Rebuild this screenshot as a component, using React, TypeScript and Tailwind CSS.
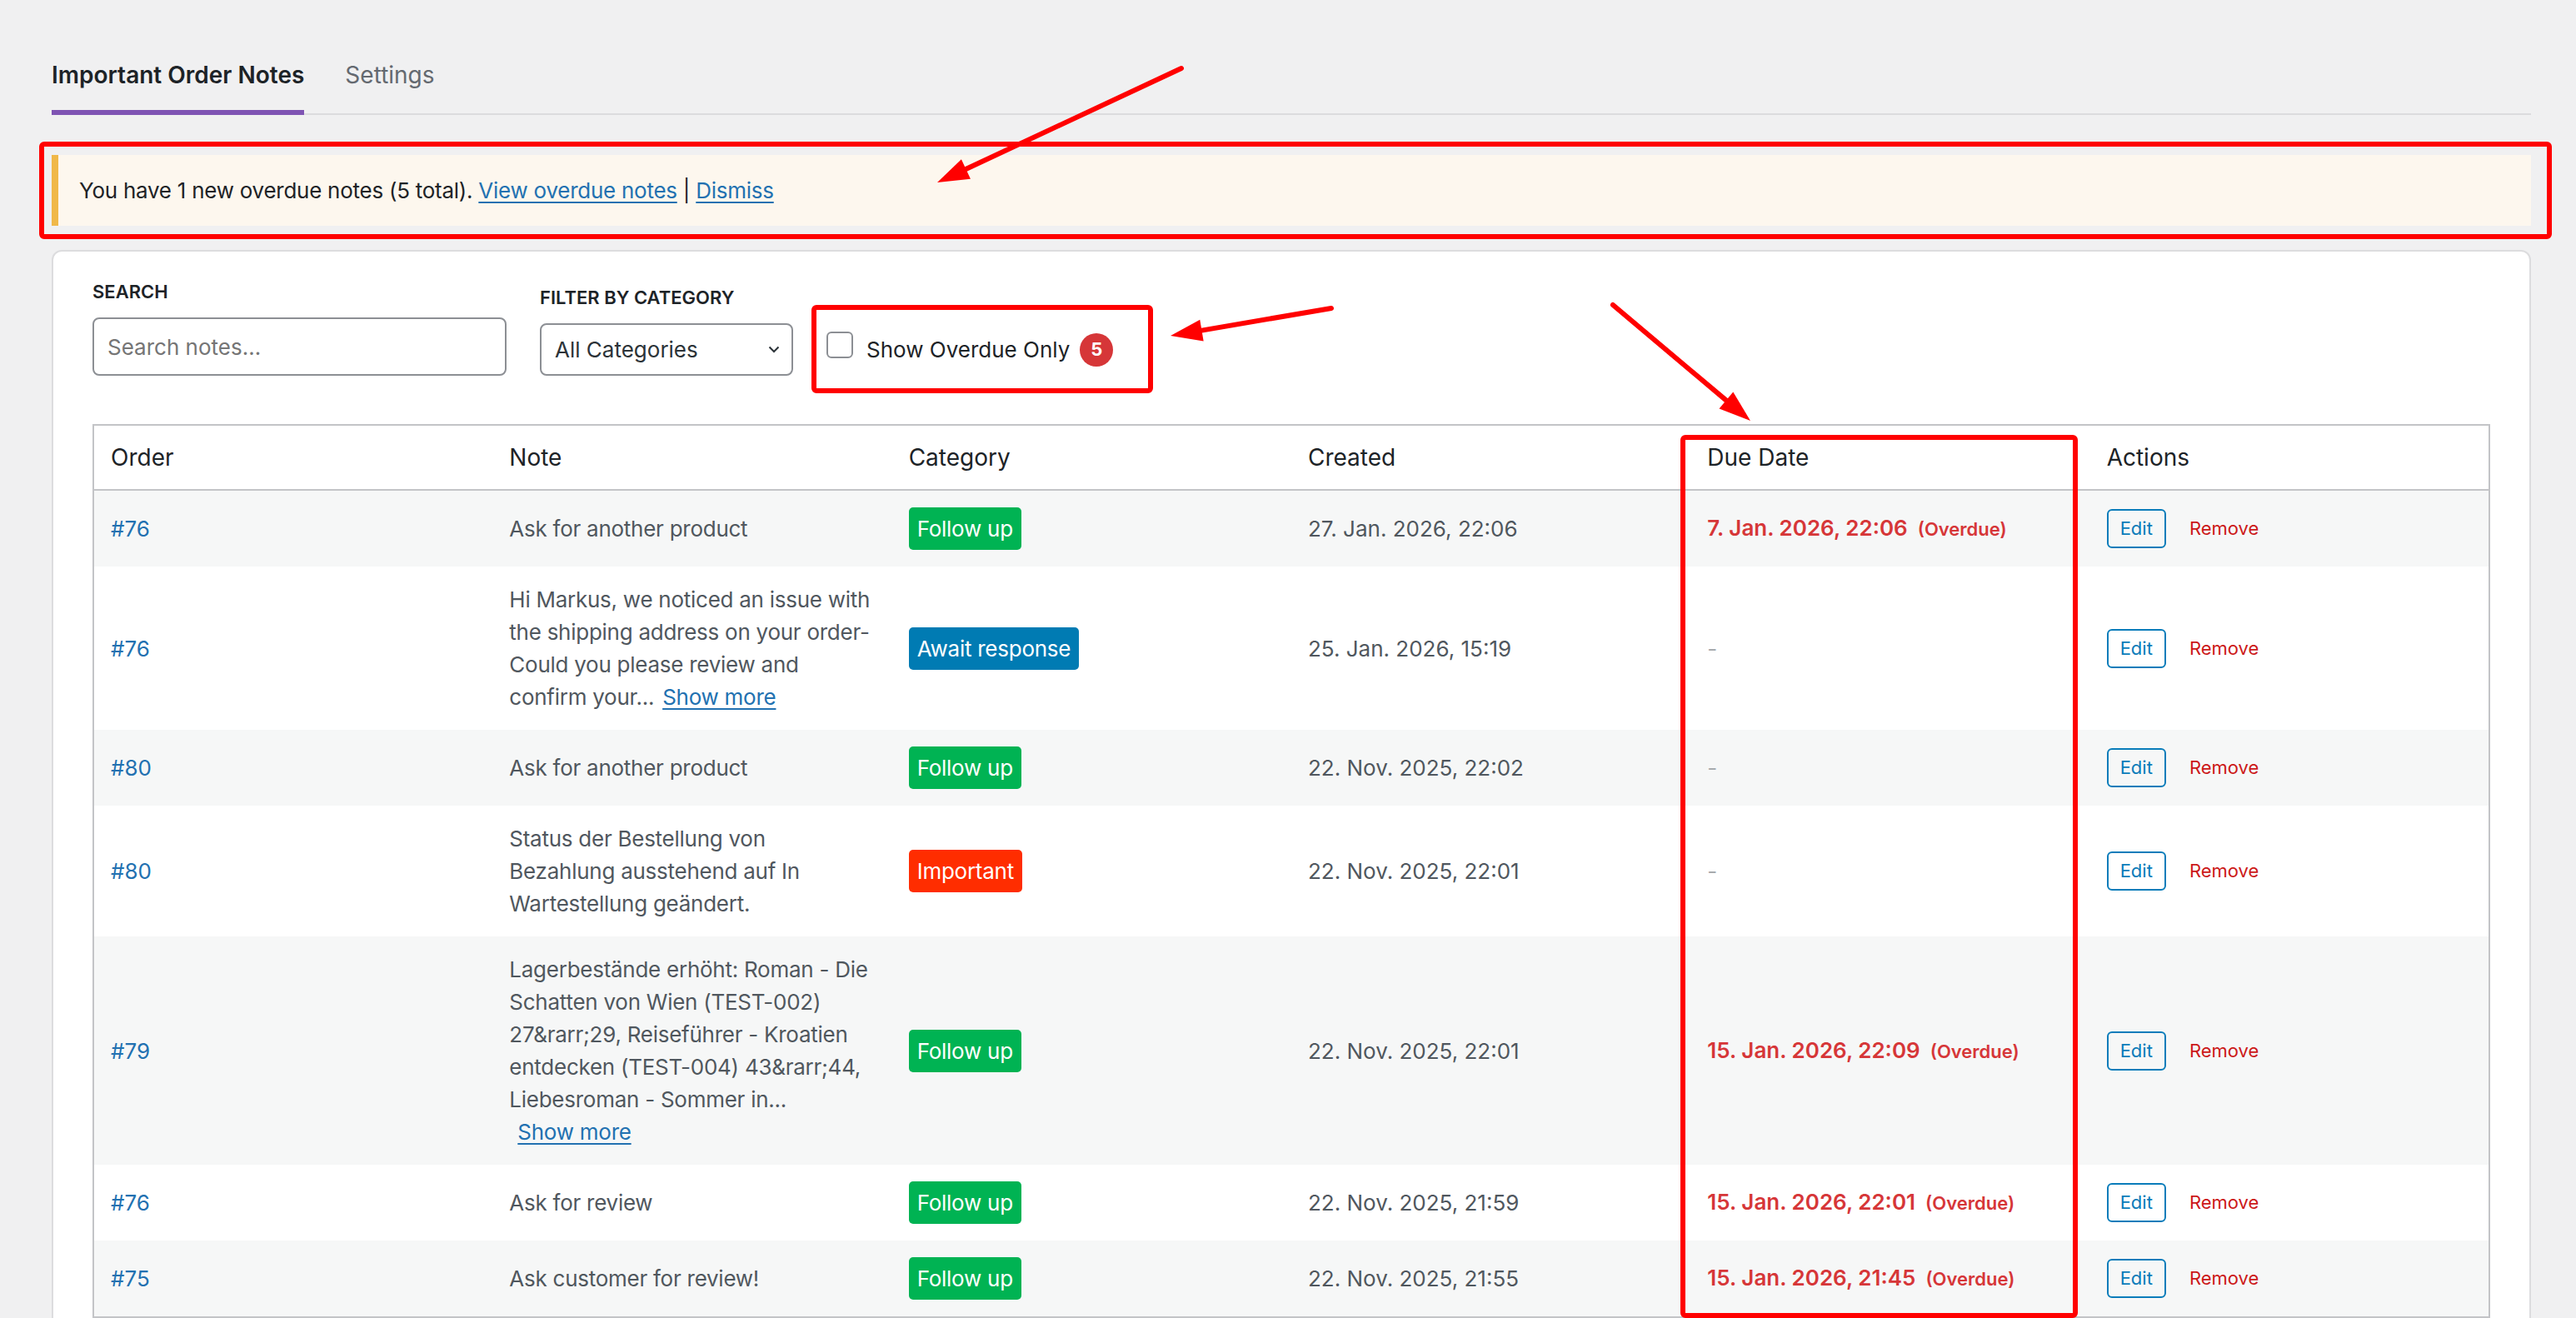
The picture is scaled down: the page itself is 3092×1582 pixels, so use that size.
import React from 'react';

type Category = 'follow' | 'await' | 'important';

type NoteRow = {
  order: string;
  lines: string[];
  // where the "Show more" link goes: end of last line, or its own line
  more?: 'inline' | 'below';
  category: Category;
  created: string;
  due?: string;
};

const categories: Record<Category, { label: string; className: string }> = {
  follow: { label: 'Follow up', className: 'bg-[#00b353]' },
  await: { label: 'Await response', className: 'bg-[#007bb3]' },
  important: { label: 'Important', className: 'bg-[#ff2d00]' },
};

const notes: NoteRow[] = [
  {
    order: '#76',
    lines: ['Ask for another product'],
    category: 'follow',
    created: '27. Jan. 2026, 22:06',
    due: '7. Jan. 2026, 22:06',
  },
  {
    order: '#76',
    lines: [
      'Hi Markus, we noticed an issue with',
      'the shipping address on your order-',
      'Could you please review and',
      'confirm your...',
    ],
    more: 'inline',
    category: 'await',
    created: '25. Jan. 2026, 15:19',
  },
  {
    order: '#80',
    lines: ['Ask for another product'],
    category: 'follow',
    created: '22. Nov. 2025, 22:02',
  },
  {
    order: '#80',
    lines: ['Status der Bestellung von', 'Bezahlung ausstehend auf In', 'Wartestellung geändert.'],
    category: 'important',
    created: '22. Nov. 2025, 22:01',
  },
  {
    order: '#79',
    lines: [
      'Lagerbestände erhöht: Roman - Die',
      'Schatten von Wien (TEST-002)',
      '27&rarr;29, Reiseführer - Kroatien',
      'entdecken (TEST-004) 43&rarr;44,',
      'Liebesroman - Sommer in...',
    ],
    more: 'below',
    category: 'follow',
    created: '22. Nov. 2025, 22:01',
    due: '15. Jan. 2026, 22:09',
  },
  {
    order: '#76',
    lines: ['Ask for review'],
    category: 'follow',
    created: '22. Nov. 2025, 21:59',
    due: '15. Jan. 2026, 22:01',
  },
  {
    order: '#75',
    lines: ['Ask customer for review!'],
    category: 'follow',
    created: '22. Nov. 2025, 21:55',
    due: '15. Jan. 2026, 21:45',
  },
];

const columns = ['Order', 'Note', 'Category', 'Created', 'Due Date', 'Actions'];

function ShowMore() {
  return (
    <a href="#" className="ml-[10px] inline-block text-[#2271b1] underline underline-offset-[4px]">
      Show more
    </a>
  );
}

function NoteText({ row }: { row: NoteRow }) {
  return (
    <div className="tracking-[-0.01em] text-[#50575e]">
      {row.lines.map((line, i) => (
        <span key={i} className="block whitespace-nowrap">
          {line}
          {row.more === 'inline' && i === row.lines.length - 1 && <ShowMore />}
        </span>
      ))}
      {row.more === 'below' && (
        <span className="block">
          <ShowMore />
        </span>
      )}
    </div>
  );
}

// red call-out arrow: shaft plus filled head at (x2, y2)
function Arrow({ x1, y1, x2, y2 }: { x1: number; y1: number; x2: number; y2: number }) {
  const len = Math.hypot(x2 - x1, y2 - y1);
  const ux = (x2 - x1) / len;
  const uy = (y2 - y1) / len;
  const head = 38;
  const half = 13;
  const bx = x2 - ux * head;
  const by = y2 - uy * head;
  const points = `${x2},${y2} ${bx - uy * half},${by + ux * half} ${bx + uy * half},${by - ux * half}`;
  return (
    <g>
      <line
        x1={x1}
        y1={y1}
        x2={bx + ux * 6}
        y2={by + uy * 6}
        stroke="#ff0000"
        strokeWidth={6}
        strokeLinecap="round"
      />
      <polygon points={points} fill="#ff0000" />
    </g>
  );
}

function Callouts() {
  return (
    <svg className="pointer-events-none absolute left-0 top-0 h-[1582px] w-[3092px]" viewBox="0 0 3092 1582">
      <g fill="none" stroke="#ff0000" strokeWidth={6}>
        <rect x={50} y={173} width={3010} height={111} rx={3} />
        <rect x={977} y={369} width={404} height={100} rx={3} />
        <rect x={2020} y={525} width={471} height={1054} rx={3} />
      </g>
      <Arrow x1={1418} y1={82} x2={1125} y2={219} />
      <Arrow x1={1598} y1={370} x2={1405} y2={403} />
      <Arrow x1={1936} y1={366} x2={2101} y2={505} />
    </svg>
  );
}

export default function App() {
  return (
    <div className="relative h-screen overflow-hidden bg-[#f0f0f1] font-['Inter',sans-serif] text-[26px] leading-[39px] text-[#1d2327]">
      <div className="pl-[62px] pr-[54px] pt-[70px]">
        {/* tabs */}
        <nav className="flex gap-[49px] border-b-2 border-[#dcdcde]">
          <a href="#" className="-mb-[2px] border-b-[6px] border-[#7f54b3] pb-[22px] text-[28px] leading-[40px] font-semibold text-[#1d2327]">
            Important Order Notes
          </a>
          <a href="#" className="-mb-[2px] border-b-[6px] border-transparent pb-[22px] text-[28px] leading-[40px] text-[#646970]">
            Settings
          </a>
        </nav>

        {/* overdue notice */}
        <div className="mt-[48px] border-l-[8px] border-[#f0b849] bg-[#fdf7ee] py-[23px] pl-[25px] tracking-[-0.01em]">
          You have 1 new overdue notes (5 total).{' '}
          <a href="#" className="text-[#2271b1] underline underline-offset-[4px]">
            View overdue notes
          </a>{' '}
          |{' '}
          <a href="#" className="text-[#2271b1] underline underline-offset-[4px]">
            Dismiss
          </a>
        </div>

        <div className="mt-[29px] rounded-[12px] border-2 border-[#dcdcde] bg-white px-[47px] pb-[48px] pt-[33px]">
          {/* filters */}
          <div className="flex items-end gap-[40px]">
            <div>
              <div className="mb-[16px] text-[22px] leading-[30px] font-semibold uppercase">Search</div>
              <input
                type="text"
                placeholder="Search notes..."
                className="h-[70px] w-[497px] rounded-[8px] border-2 border-[#8c8f94] bg-white px-[16px] text-[26px] outline-none placeholder:text-[#757575]"
              />
            </div>
            <div>
              <div className="mb-[16px] text-[22px] leading-[30px] font-semibold uppercase">Filter by category</div>
              <div className="flex h-[63px] w-[304px] items-center justify-between rounded-[8px] border-2 border-[#8c8f94] bg-white pl-[16px] pr-[14px] text-[#2c3338]">
                <span>All Categories</span>
                <svg width="14" height="9" viewBox="0 0 14 9" fill="none" stroke="#2c3338" strokeWidth="2">
                  <path d="M1.5 1.5 7 7l5.5-5.5" />
                </svg>
              </div>
            </div>
            <label className="flex h-[63px] items-center">
              <span className="mb-[12px] h-[32px] w-[32px] rounded-[6px] border-2 border-[#8c8f94] bg-white" />
              <span className="ml-[16px]">Show Overdue Only</span>
              <span className="ml-[12px] flex h-[40px] w-[40px] items-center justify-center rounded-full bg-[#d63638] text-[22px] font-bold text-white">
                5
              </span>
            </label>
          </div>

          {/* notes table */}
          <table className="mt-[58px] w-full table-fixed border-2 border-[#c3c4c7] bg-white">
            <thead>
              <tr>
                {columns.map((c) => (
                  <th
                    key={c}
                    className="border-b-2 border-[#c3c4c7] px-[20px] py-[20px] text-left text-[28px] leading-[36px] font-normal text-[#1d2327]"
                  >
                    {c}
                  </th>
                ))}
              </tr>
            </thead>
            <tbody>
              {notes.map((row, i) => {
                const cat = categories[row.category];
                return (
                  <tr key={i} className={i % 2 === 0 ? 'bg-[#f6f7f7]' : 'bg-white'}>
                    <td className="px-[20px] py-[20px] align-middle">
                      <a href="#" className="text-[#2271b1]">
                        {row.order}
                      </a>
                    </td>
                    <td className="px-[20px] py-[20px] align-middle">
                      <NoteText row={row} />
                    </td>
                    <td className="px-[20px] py-[20px] align-middle">
                      <div className="flex">
                        <span
                          className={`flex h-[51px] items-center rounded-[5px] px-[10px] font-normal tracking-[-0.01em] text-white ${cat.className}`}
                        >
                          {cat.label}
                        </span>
                      </div>
                    </td>
                    <td className="px-[20px] py-[20px] align-middle text-[#50575e]">{row.created}</td>
                    <td className="px-[20px] py-[20px] align-middle">
                      {row.due ? (
                        <span className="font-semibold text-[#d63638]">
                          {row.due}
                          <span className="ml-[12px] text-[22px]">(Overdue)</span>
                        </span>
                      ) : (
                        <span className="text-[#a7aaad]">-</span>
                      )}
                    </td>
                    <td className="px-[20px] py-[20px] align-middle">
                      <div className="flex items-center">
                        <a
                          href="#"
                          className="flex h-[47px] items-center rounded-[6px] border-2 border-[#0a7cba] px-[14px] text-[22px] text-[#0a7cba]"
                        >
                          Edit
                        </a>
                        <a href="#" className="ml-[28px] text-[22px] text-[#cc1818]">
                          Remove
                        </a>
                      </div>
                    </td>
                  </tr>
                );
              })}
            </tbody>
          </table>
        </div>
      </div>
      <Callouts />
    </div>
  );
}
